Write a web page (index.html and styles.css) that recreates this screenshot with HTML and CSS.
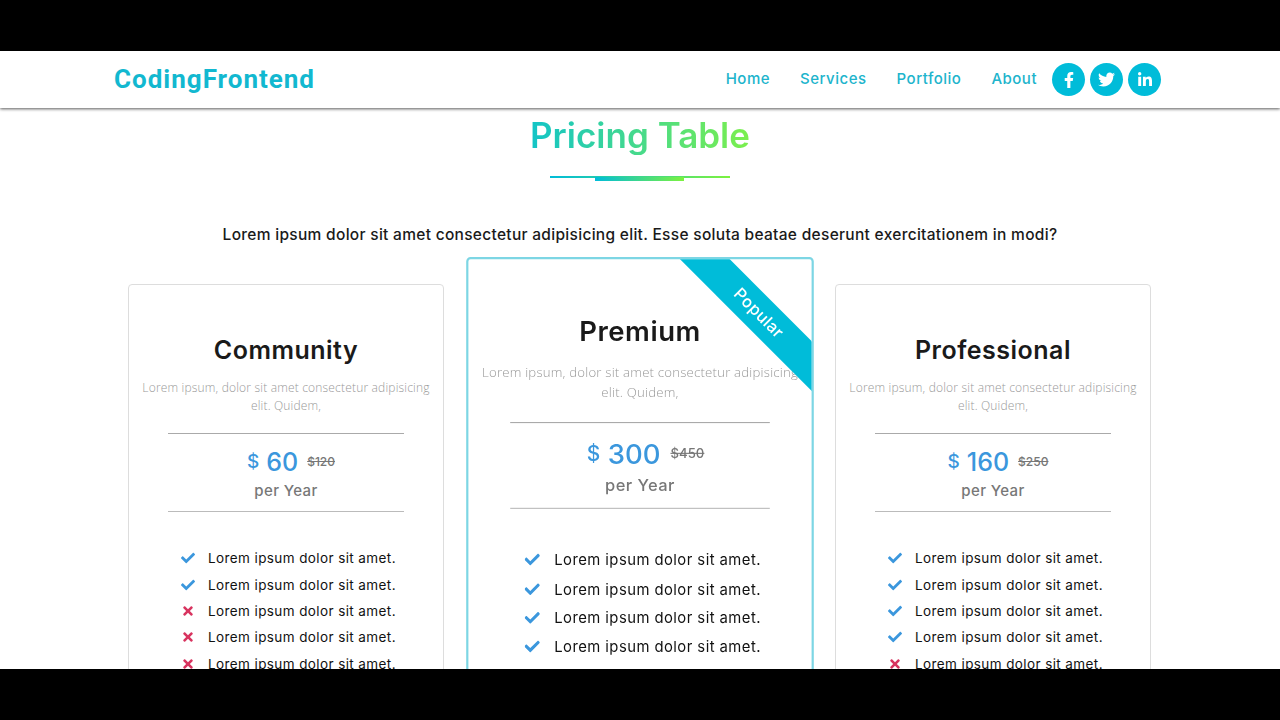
FILE: index.html
```html
<!DOCTYPE html>
<html lang="en">
<head>
	<meta charset="UTF-8">
	<title>Pricing Table</title>
	<link rel="stylesheet" href="styles.css">
</head>
<body>
<svg class="sprite" xmlns="http://www.w3.org/2000/svg">
	<symbol id="i-fb" viewBox="0 0 320 512"><path d="M279.14 288l14.22-92.66h-88.91v-60.13c0-25.35 12.42-50.06 52.24-50.06h40.42V6.26S260.43 0 225.36 0c-73.22 0-121.08 44.38-121.08 124.72v70.62H22.89V288h81.39v224h100.17V288z"/></symbol>
	<symbol id="i-tw" viewBox="0 0 512 512"><path d="M459.37 151.716c.325 4.548.325 9.097.325 13.645 0 138.72-105.583 298.558-298.558 298.558-59.452 0-114.68-17.219-161.137-47.106 8.447.974 16.568 1.299 25.34 1.299 49.055 0 94.213-16.568 130.274-44.832-46.132-.975-84.792-31.188-98.112-72.772 6.498.974 12.995 1.624 19.818 1.624 9.421 0 18.843-1.3 27.614-3.573-48.081-9.747-84.143-51.98-84.143-102.985v-1.299c13.969 7.797 30.214 12.67 47.431 13.319-28.264-18.843-46.781-51.005-46.781-87.391 0-19.492 5.197-37.36 14.294-52.954 51.655 63.675 129.3 105.258 216.365 109.807-1.624-7.797-2.599-15.918-2.599-24.04 0-57.828 46.782-104.934 104.934-104.934 30.213 0 57.502 12.67 76.67 33.137 23.715-4.548 46.456-13.645 66.599-25.34-7.798 24.366-24.366 44.833-46.132 57.827 21.117-2.273 41.584-8.122 60.426-16.243-14.292 20.791-32.161 39.308-52.628 54.253z"/></symbol>
	<symbol id="i-in" viewBox="0 0 448 512"><path d="M100.28 448H7.4V148.9h92.88zM53.79 108.1C24.09 108.1 0 83.5 0 53.8a53.79 53.79 0 0 1 107.58 0c0 29.7-24.1 54.3-53.79 54.3zM447.9 448h-92.68V302.4c0-34.7-.7-79.2-48.29-79.2-48.29 0-55.69 37.7-55.69 76.7V448h-92.78V148.9h89.08v40.8h1.3c12.4-23.5 42.69-48.3 87.88-48.3 94 0 111.28 61.9 111.28 142.3V448z"/></symbol>
	<symbol id="i-check" viewBox="0 0 512 512"><path d="M173.898 439.404l-166.4-166.4c-9.997-9.997-9.997-26.206 0-36.204l36.203-36.204c9.997-9.998 26.207-9.998 36.204 0L192 312.69 432.095 72.596c9.997-9.997 26.207-9.997 36.204 0l36.203 36.204c9.997 9.997 9.997 26.206 0 36.204l-294.4 294.401c-9.998 9.997-26.207 9.997-36.204-.001z"/></symbol>
	<symbol id="i-times" viewBox="0 0 352 512"><path d="M242.72 256l100.07-100.07c12.28-12.28 12.28-32.19 0-44.48l-22.24-22.24c-12.28-12.28-32.19-12.28-44.48 0L176 189.28 75.93 89.21c-12.28-12.28-32.19-12.28-44.48 0L9.21 111.45c-12.28 12.28-12.28 32.19 0 44.48L109.28 256 9.21 356.07c-12.28 12.28-12.28 32.19 0 44.48l22.24 22.24c12.28 12.28 32.2 12.28 44.48 0L176 322.72l100.07 100.07c12.28 12.28 32.2 12.28 44.48 0l22.24-22.24c12.28-12.28 12.28-32.19 0-44.48L242.72 256z"/></symbol>
</svg>

<div class="letterbox"></div>
<div class="stage">
	<header class="header">
		<a href="#" class="logo">CodingFrontend</a>
		<nav class="nav">
			<a href="#">Home</a>
			<a href="#">Services</a>
			<a href="#">Portfolio</a>
			<a href="#">About</a>
		</nav>
		<div class="social">
			<a href="#"><svg class="social-fb"><use href="#i-fb"/></svg></a>
			<a href="#"><svg class="social-tw"><use href="#i-tw"/></svg></a>
			<a href="#"><svg class="social-in"><use href="#i-in"/></svg></a>
		</div>
	</header>

	<h1 class="title">Pricing Table</h1>
	<div class="underline"><span></span></div>
	<p class="intro">Lorem ipsum dolor sit amet consectetur adipisicing elit. Esse soluta beatae deserunt exercitationem in modi?</p>

	<div class="cards">
		<div class="card">
			<h2>Community</h2>
			<p class="desc">Lorem ipsum, dolor sit amet consectetur adipisicing elit. Quidem,</p>
			<div class="price">
				<div class="price-line"><span class="cur">$</span><span class="num">60</span><del>$120</del></div>
				<div class="per">per Year</div>
			</div>
			<ul class="features">
				<li><svg class="yes"><use href="#i-check"/></svg>Lorem ipsum dolor sit amet.</li>
				<li><svg class="yes"><use href="#i-check"/></svg>Lorem ipsum dolor sit amet.</li>
				<li><svg class="no"><use href="#i-times"/></svg>Lorem ipsum dolor sit amet.</li>
				<li><svg class="no"><use href="#i-times"/></svg>Lorem ipsum dolor sit amet.</li>
				<li><svg class="no"><use href="#i-times"/></svg>Lorem ipsum dolor sit amet.</li>
			</ul>
		</div>

		<div class="card card-popular">
			<div class="ribbon">Popular</div>
			<h2>Premium</h2>
			<p class="desc">Lorem ipsum, dolor sit amet consectetur adipisicing elit. Quidem,</p>
			<div class="price">
				<div class="price-line"><span class="cur">$</span><span class="num">300</span><del>$450</del></div>
				<div class="per">per Year</div>
			</div>
			<ul class="features">
				<li><svg class="yes"><use href="#i-check"/></svg>Lorem ipsum dolor sit amet.</li>
				<li><svg class="yes"><use href="#i-check"/></svg>Lorem ipsum dolor sit amet.</li>
				<li><svg class="yes"><use href="#i-check"/></svg>Lorem ipsum dolor sit amet.</li>
				<li><svg class="yes"><use href="#i-check"/></svg>Lorem ipsum dolor sit amet.</li>
			</ul>
		</div>

		<div class="card">
			<h2>Professional</h2>
			<p class="desc">Lorem ipsum, dolor sit amet consectetur adipisicing elit. Quidem,</p>
			<div class="price">
				<div class="price-line"><span class="cur">$</span><span class="num">160</span><del>$250</del></div>
				<div class="per">per Year</div>
			</div>
			<ul class="features">
				<li><svg class="yes"><use href="#i-check"/></svg>Lorem ipsum dolor sit amet.</li>
				<li><svg class="yes"><use href="#i-check"/></svg>Lorem ipsum dolor sit amet.</li>
				<li><svg class="yes"><use href="#i-check"/></svg>Lorem ipsum dolor sit amet.</li>
				<li><svg class="yes"><use href="#i-check"/></svg>Lorem ipsum dolor sit amet.</li>
				<li><svg class="no"><use href="#i-times"/></svg>Lorem ipsum dolor sit amet.</li>
			</ul>
		</div>
	</div>
</div>
<div class="letterbox"></div>
</body>
</html>
```

FILE: styles.css
```css
*{margin:0;padding:0;box-sizing:border-box;}
html,body{height:720px;overflow:hidden;}
body{background:#000;font-family:"Inter","Liberation Sans",sans-serif;display:flex;flex-direction:column;}
a{text-decoration:none;}
.sprite{display:none;}

.letterbox{height:51px;flex:none;background:#000;}
.stage{height:618px;flex:none;background:#fff;overflow:hidden;}

/* header */
.header{height:57px;padding:0 119px 0 114px;background:#fff;display:flex;align-items:center;box-shadow:0 1px 3px rgba(0,0,0,.65);}
.logo{font-family:"Roboto",sans-serif;font-weight:700;font-size:26px;letter-spacing:1px;color:#12b8d0;margin-right:auto;margin-bottom:2px;}
.nav{display:flex;gap:30px;margin-right:15px;margin-bottom:3px;}
.nav a{font-size:15px;font-weight:500;letter-spacing:.5px;color:#20b4cc;}
.social{display:flex;gap:5px;}
.social a{width:33px;height:33px;border-radius:50%;background:#00bcd9;display:flex;align-items:center;justify-content:center;}
.social svg{fill:#fff;}
.social-fb{width:10px;height:16px;}
.social-tw{width:17px;height:17px;}
.social-in{width:14px;height:16px;}

/* title */
.title{margin-top:7px;text-align:center;font-size:35px;font-weight:600;line-height:40px;}
.title{background:linear-gradient(to right,#12c4c8,#7cf04c);background-size:222px 100%;background-position:center;background-repeat:no-repeat;-webkit-background-clip:text;background-clip:text;color:transparent;}
.underline{width:180px;height:2px;margin:21px auto 0;background:linear-gradient(to right,#00bcd9,#7cf23f);position:relative;}
.underline span{position:absolute;left:45px;top:1px;width:89px;height:4px;background:linear-gradient(to right,#00bcd9,#7cf23f);}
.intro{margin-top:47px;text-align:center;font-size:15.5px;font-weight:500;letter-spacing:.3px;line-height:20px;color:#1a1a1a;}

/* cards */
.cards{margin:39px 0 0 128px;width:1023px;display:flex;justify-content:space-between;}
.card{width:316px;height:540px;border:1px solid #ddd;border-radius:4px;background:#fff;padding:49px 0 0;text-align:center;position:relative;overflow:hidden;}
.card-popular{transform:scale(1.1);border-color:#7dd6e4;border-width:2px;}
.card h2{font-size:25px;font-weight:600;letter-spacing:.5px;line-height:32px;color:#1a1a1a;}
.desc{margin:13px 6px 0;font-family:"Open Sans",sans-serif;font-weight:300;font-size:12px;letter-spacing:.18px;line-height:18px;color:#999;}

.price{width:236px;margin:18px auto 0;padding:13px 0 8px;border-top:1px solid #aaa;border-bottom:1px solid #bbb;}
.price-line{display:flex;justify-content:center;align-items:center;padding-left:10px;color:#3b97dd;line-height:30px;}
.cur{font-size:19px;font-weight:500;margin-right:7px;}
.num{font-size:25px;font-weight:500;}
.price del{font-size:12px;font-weight:500;color:#777;margin-left:9px;}
.per{font-size:15px;font-weight:500;letter-spacing:.4px;color:#777;line-height:24px;margin-top:2px;}

.features{list-style:none;margin:33px auto 0;width:220px;padding-left:5px;text-align:left;}
.features li{height:26.4px;display:flex;align-items:center;font-size:13.5px;font-weight:400;letter-spacing:.4px;color:#111;white-space:nowrap;}
.features svg{width:14px;height:14px;margin-right:13px;flex:none;}
.yes{fill:#3b97dd;}
.no{fill:#d8345f;}

/* ribbon */
.ribbon{position:absolute;top:33px;right:-52px;width:200px;height:32px;line-height:32px;background:#00bcd9;color:#fff;font-size:15px;font-weight:500;letter-spacing:.3px;text-align:center;transform:rotate(45deg);}
```
